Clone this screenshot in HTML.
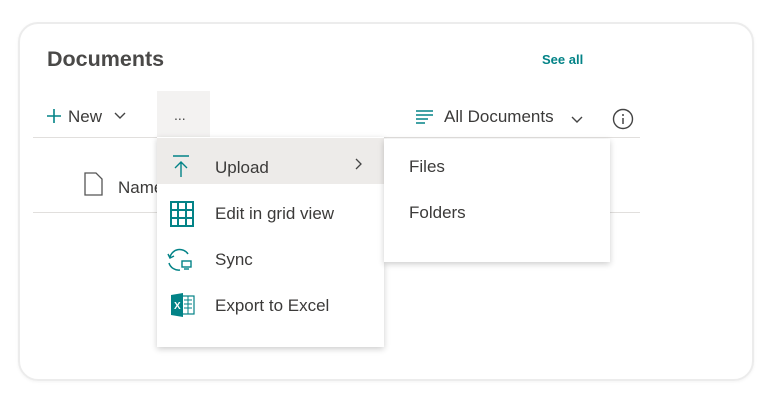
<!DOCTYPE html>
<html><head><style>
*{margin:0;padding:0;box-sizing:border-box}
body{width:768px;height:404px;background:#fff;font-family:"Liberation Sans",sans-serif;color:#323130;position:relative;overflow:hidden}
.a{position:absolute}
.card{left:18px;top:22px;width:736px;height:359px;border:2px solid #ececec;border-radius:20px;box-shadow:0 1px 3px rgba(0,0,0,.05)}
.t{font-size:17px;color:#3b3a39}
</style></head><body>
<div class="a card"></div>
<div class="a" style="left:47px;top:47px;font-size:21.5px;font-weight:bold;color:#4a4948">Documents</div>
<div class="a" style="left:542px;top:52px;font-size:13px;font-weight:bold;color:#038387">See all</div>
<svg class="a" style="left:47px;top:109px" width="14" height="14"><path d="M7 0v14M0 7h14" stroke="#038387" stroke-width="1.6"/></svg>
<div class="a t" style="left:68px;top:107px">New</div>
<svg class="a" style="left:114px;top:112px" width="12" height="8"><path d="M1 1l5 5 5-5" stroke="#444" stroke-width="1.4" fill="none"/></svg>
<div class="a" style="left:157px;top:91px;width:53px;height:46px;background:#f3f2f1"></div>
<div class="a" style="left:174px;top:107px;font-size:14px;color:#444">...</div>
<div class="a" style="left:33px;top:137px;width:607px;height:1px;background:#e1dfdd"></div>
<div class="a" style="left:33px;top:212px;width:607px;height:1px;background:#e1dfdd"></div>
<svg class="a" style="left:416px;top:110px" width="18" height="14"><path d="M0 1h17M0 5h17M0 9h12M0 13h9" stroke="#038387" stroke-width="1.4"/></svg>
<div class="a t" style="left:444px;top:107px">All Documents</div>
<svg class="a" style="left:571px;top:116px" width="12" height="8"><path d="M1 1l5 5 5-5" stroke="#444" stroke-width="1.4" fill="none"/></svg>
<svg class="a" style="left:612px;top:108px" width="22" height="22"><circle cx="11" cy="11" r="9.5" stroke="#444" stroke-width="1.4" fill="none"/><path d="M11 10v6" stroke="#444" stroke-width="1.5"/><circle cx="11" cy="7" r="1" fill="#444"/></svg>
<svg class="a" style="left:84px;top:172px" width="20" height="24"><path d="M1 1h11l6 6v16H1z" stroke="#555" stroke-width="1.3" fill="none"/></svg>
<div class="a t" style="left:118px;top:178px">Name</div>
<div class="a" style="left:157px;top:137px;width:227px;height:210px;background:#fff;box-shadow:0 2px 6px rgba(0,0,0,.2)"></div>
<div class="a" style="left:157px;top:138px;width:227px;height:46px;background:#edebe9"></div>
<svg class="a" style="left:172px;top:155px" width="18" height="24"><path d="M1 1h16M9 22V7M3 13l6-6 6 6" stroke="#038387" stroke-width="1.4" fill="none"/></svg>
<div class="a t" style="left:215px;top:158px">Upload</div>
<svg class="a" style="left:355px;top:158px" width="8" height="12"><path d="M1 1l5 5-5 5" stroke="#444" stroke-width="1.3" fill="none"/></svg>
<svg class="a" style="left:170px;top:201px" width="24" height="26"><rect x="1" y="1" width="22" height="24" fill="none" stroke="#038387" stroke-width="2"/><path d="M8 1v24M16 1v24M1 9h22M1 17h22" stroke="#038387" stroke-width="2"/></svg>
<div class="a t" style="left:215px;top:204px">Edit in grid view</div>
<svg class="a" style="left:166px;top:248px" width="28" height="24"><path d="M22 6A10 10 0 0 0 4 9M3 15a10 10 0 0 0 11 7" stroke="#038387" stroke-width="1.5" fill="none"/><path d="M2 6l2 4 4-2M24 18l-2-4-3 2" stroke="#038387" stroke-width="1.5" fill="none"/><rect x="16" y="13" width="9" height="6" fill="#fff" stroke="#038387" stroke-width="1.4"/><path d="M18 21h5" stroke="#038387" stroke-width="1.4"/></svg>
<div class="a t" style="left:215px;top:250px">Sync</div>
<svg class="a" style="left:170px;top:293px" width="26" height="24"><rect x="10" y="3" width="14" height="18" fill="#fff" stroke="#038387" stroke-width="1.2"/><path d="M14 7h8M14 11h8M14 15h8M18 3v18" stroke="#038387" stroke-width="1"/><path d="M1 2l12-2v24L1 22z" fill="#038387"/><text x="4" y="16" font-size="10" font-weight="bold" fill="#fff" font-family="Liberation Sans">X</text></svg>
<div class="a t" style="left:215px;top:296px">Export to Excel</div>
<div class="a" style="left:384px;top:139px;width:226px;height:123px;background:#fff;box-shadow:0 2px 6px rgba(0,0,0,.2)"></div>
<div class="a t" style="left:409px;top:157px">Files</div>
<div class="a t" style="left:409px;top:203px">Folders</div>
</body></html>
